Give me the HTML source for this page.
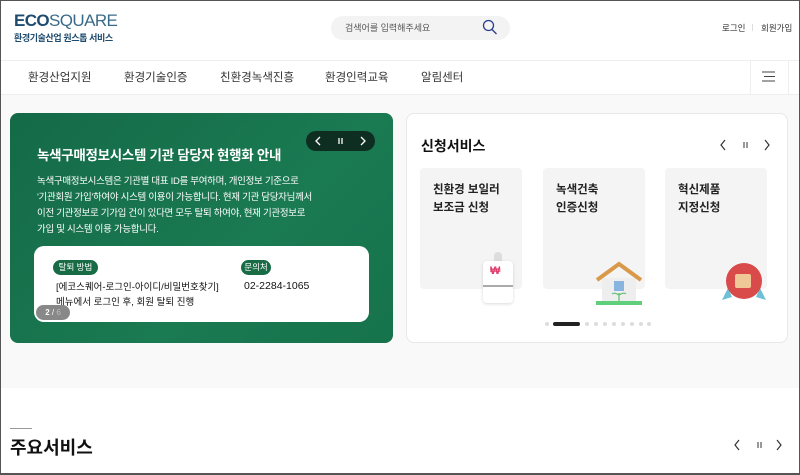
<!DOCTYPE html>
<html><head><meta charset="utf-8"><style>
*{margin:0;padding:0;box-sizing:border-box}
body{width:800px;height:475px;overflow:hidden;font-family:"Liberation Sans","Noto Sans CJK KR",sans-serif;background:#fff;position:relative;color:#222}
.a{position:absolute}
.frame{position:absolute;left:0;top:0;width:800px;height:475px;border:1px solid #555;border-width:1px 1px 2px 1px;pointer-events:none;z-index:10}
.nav span{position:absolute;top:69px;font-size:11.5px;color:#333}
.tile{position:absolute;top:168px;width:102px;height:121px;background:#f4f4f4;border-radius:4px}
.tile p{position:absolute;left:13px;top:13px;font-size:11.5px;font-weight:bold;line-height:18px;color:#222}
.dot{position:absolute;top:322px;width:4px;height:4px;border-radius:2px;background:#ddd}
</style></head><body>
<div class="frame"></div>
<div class="a" style="left:14px;top:11px;font-size:17px;color:#1e4b6e;letter-spacing:-0.6px;line-height:20px"><b>ECO</b><span style="color:#3a6a8a">SQUARE</span></div>
<div class="a" style="left:14px;top:31px;font-size:9px;color:#1e4b6e;font-weight:bold;letter-spacing:-0.4px">환경기술산업 원스톱 서비스</div>
<div class="a" style="left:331px;top:16px;width:179px;height:24px;border-radius:12px;background:#f3f3f3"></div>
<div class="a" style="left:345px;top:21px;font-size:9px;color:#555">검색어를 입력해주세요</div>
<svg class="a" style="left:482px;top:19px" width="16" height="17" viewBox="0 0 16 17"><circle cx="6.5" cy="6.5" r="5" fill="none" stroke="#2a3f8a" stroke-width="1.3"/><path d="M10 10.5L14.5 15" stroke="#2a3f8a" stroke-width="1.3"/></svg>
<div class="a" style="left:722px;top:22px;font-size:8.5px;color:#333">로그인</div>
<div class="a" style="left:752px;top:24px;width:1px;height:7px;background:#ddd"></div>
<div class="a" style="left:761px;top:22px;font-size:8.5px;color:#333">회원가입</div>
<div class="a" style="left:0;top:60px;width:800px;height:1px;background:#eee"></div>
<div class="a" style="left:0;top:94px;width:800px;height:1px;background:#eee"></div>
<div class="nav"><span style="left:28px">환경산업지원</span><span style="left:124px">환경기술인증</span><span style="left:220px">친환경녹색진흥</span><span style="left:325px">환경인력교육</span><span style="left:421px">알림센터</span></div>
<div class="a" style="left:750px;top:60px;width:1px;height:34px;background:#eee"></div>
<div class="a" style="left:788px;top:60px;width:1px;height:34px;background:#eee"></div>
<svg class="a" style="left:762px;top:71px" width="14" height="12"><path d="M0 1H13M2 5.5H13M0 10H13" stroke="#444" stroke-width="1"/></svg>
<div class="a" style="left:1px;top:95px;width:798px;height:293px;background:#f9f9f9"></div>
<div class="a" style="left:10px;top:113px;width:383px;height:230px;border-radius:8px;background:linear-gradient(135deg,#146a47,#1a7a52 60%,#16734c)"></div>
<div class="a" style="left:306px;top:131px;width:69px;height:20px;border-radius:10px;background:#0f2e22"></div>
<svg class="a" style="left:306px;top:131px" width="69" height="20"><path d="M320 6L316 10L320 14" transform="translate(-306 0)" fill="none" stroke="#fff" stroke-width="1.3"/><path d="M339 7V13M342 7V13" transform="translate(-306 0)" stroke="#fff" stroke-width="1.3"/><path d="M361 6L365 10L361 14" transform="translate(-306 0)" fill="none" stroke="#fff" stroke-width="1.3"/></svg>
<div class="a" style="left:37px;top:144px;font-size:13.5px;font-weight:bold;color:#fff;letter-spacing:-0.3px">녹색구매정보시스템 기관 담당자 현행화 안내</div>
<div class="a" style="left:37px;top:174px;width:320px;font-size:9.5px;line-height:16px;color:#fff;letter-spacing:-0.3px">녹색구매정보시스템은 기관별 대표 ID를 부여하며, 개인정보 기준으로<br>'기관회원 가입'하여야 시스템 이용이 가능합니다. 현재 기관 담당자님께서<br>이전 기관정보로 기가입 건이 있다면 모두 탈퇴 하여야, 현재 기관정보로<br>가입 및 시스템 이용 가능합니다.</div>
<div class="a" style="left:34px;top:246px;width:335px;height:76px;border-radius:10px;background:#fff"></div>
<div class="a" style="left:53px;top:260px;width:45px;height:15px;border-radius:8px;background:#176b45;color:#fff;font-size:8.5px;text-align:center;line-height:15px">탈퇴 방법</div>
<div class="a" style="left:241px;top:260px;width:30px;height:15px;border-radius:8px;background:#176b45;color:#fff;font-size:8.5px;text-align:center;line-height:15px">문의처</div>
<div class="a" style="left:56px;top:280px;font-size:9.5px;line-height:15px;color:#111">[에코스퀘어-로그인-아이디/비밀번호찾기]<br>메뉴에서 로그인 후, 회원 탈퇴 진행</div>
<div class="a" style="left:244px;top:280px;font-size:10.5px;color:#111">02-2284-1065</div>
<div class="a" style="left:36px;top:305px;width:34px;height:15px;border-radius:8px;background:#888;color:#fff;font-size:8px;text-align:center;line-height:15px"><b>2</b> / <span style="color:#bbb">6</span></div>
<div class="a" style="left:406px;top:113px;width:382px;height:230px;border-radius:8px;background:#fff;border:1px solid #e8e8e8"></div>
<div class="a" style="left:421px;top:136px;font-size:14px;font-weight:bold;color:#111">신청서비스</div>
<svg class="a" style="left:715px;top:137px" width="60" height="16"><path d="M10 3L6 8L10 13" fill="none" stroke="#333" stroke-width="1.2"/><path d="M29 5V11M32 5V11" stroke="#333" stroke-width="1"/><path d="M50 3L54 8L50 13" fill="none" stroke="#333" stroke-width="1.2"/></svg>
<div class="tile" style="left:420px"><p>친환경 보일러<br>보조금 신청</p></div>
<div class="tile" style="left:543px"><p>녹색건축<br>인증신청</p></div>
<div class="tile" style="left:665px;width:102px"><p>혁신제품<br>지정신청</p></div>
<div class="a" style="left:494px;top:252px;width:8px;height:10px;border-radius:4px 4px 0 0;background:#ddd"></div>
<div class="a" style="left:483px;top:261px;width:30px;height:42px;border-radius:4px;background:#fff;box-shadow:0 1px 3px rgba(0,0,0,.15)"></div>
<div class="a" style="left:490px;top:265px;font-size:11px;color:#e03a6a;font-weight:bold">₩</div>
<div class="a" style="left:483px;top:285px;width:30px;height:2px;background:#aaa"></div>
<svg class="a" style="left:592px;top:261px" width="54" height="45"><rect x="4" y="40" width="46" height="4" fill="#5fcf7c"/><rect x="10" y="17" width="34" height="23" fill="#eee"/><path d="M5 19L27 3L49 19" fill="none" stroke="#d89a4a" stroke-width="4"/><rect x="22" y="20" width="10" height="10" fill="#8ab4e0"/><path d="M27 40V32M27 34Q22 31 20 33M27 34Q32 31 34 33" stroke="#5fbf6c" stroke-width="1.2" fill="none"/></svg>
<svg class="a" style="left:720px;top:260px" width="48" height="46"><path d="M8 28L2 40L12 37M40 28L46 40L36 37" fill="#6cc0d8"/><circle cx="24" cy="21" r="18" fill="#d94a4a"/><rect x="15" y="14" width="16" height="14" rx="2" fill="#f0c898"/></svg>
<div class="dot" style="left:545px"></div>
<div class="a" style="left:553px;top:322px;width:27px;height:4px;border-radius:2px;background:#222"></div>
<div class="dot" style="left:585px"></div><div class="dot" style="left:594px"></div><div class="dot" style="left:603px"></div><div class="dot" style="left:612px"></div><div class="dot" style="left:621px"></div><div class="dot" style="left:630px"></div><div class="dot" style="left:639px"></div><div class="dot" style="left:647px"></div>
<div class="a" style="left:10px;top:428px;width:22px;height:1px;background:#999"></div>
<div class="a" style="left:10px;top:434px;font-size:18px;font-weight:bold;color:#111">주요서비스</div>
<svg class="a" style="left:730px;top:437px" width="56" height="16"><path d="M9 3L5 8L9 13" fill="none" stroke="#333" stroke-width="1.2"/><path d="M28 5V11M31 5V11" stroke="#333" stroke-width="1"/><path d="M47 3L51 8L47 13" fill="none" stroke="#333" stroke-width="1.2"/></svg>
</body></html>
